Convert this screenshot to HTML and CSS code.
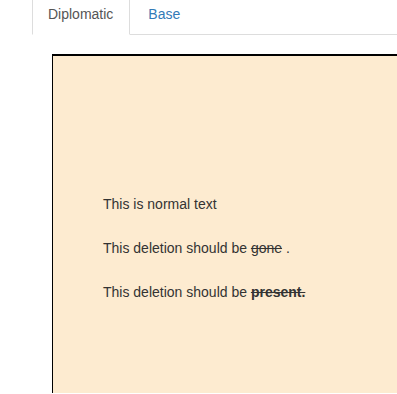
FILE: index.html
```html
<!DOCTYPE html>
<html lang="en">
<head>
    <meta charset="UTF-8">
    <meta name="viewport" content="width=device-width, initial-scale=1.0">
    <title>Diplomatic view</title>
    <link rel="stylesheet" href="styles.css">
</head>
<body>

    <!-- tabs -->
    <ul class="nav-tabs">
        <li class="tab active"><a href="#">Diplomatic</a></li>
        <li class="tab"><a href="#">Base</a></li>
    </ul>

    <!-- transcription -->
    <div class="page">
        <p>This is normal text</p>
        <p>This deletion should be <del>gone</del> .</p>
        <p>This deletion should be <del class="strong">present.</del></p>
    </div>

</body>
</html>
```

FILE: styles.css
```css
body {
    font-family: "Liberation Sans", Arial, sans-serif;
    font-size: 14px;
    line-height: 20px;
    color: #333;
    background-color: #fff;
    margin: 0;
    padding: 0;
    overflow: hidden;
}

.nav-tabs {
    list-style: none;
    margin: -7px 0 0 32px;
    padding: 0;
    display: flex;
    border-bottom: 1px solid #ddd;
}

.tab {
    margin-right: 2px;
    margin-bottom: -1px;
}

.tab a {
    display: block;
    padding: 10px 16px 10px 15px;
    border: 1px solid transparent;
    color: #337ab7;
    text-decoration: none;
}

.tab.active a {
    color: #555;
    background-color: #fff;
    border-color: #ddd #ddd transparent;
}

.page {
    box-sizing: border-box;
    margin: 19px 0 0 52px;
    height: 339px;
    background-color: #fdebd0;
    border-top: 2px solid #000;
    border-left: 1.5px solid #000;
    padding: 138px 0 0 50px;
}

.page p {
    margin: 0 0 24px;
}

del {
    text-decoration: line-through;
}

del.strong {
    font-weight: bold;
}
```
